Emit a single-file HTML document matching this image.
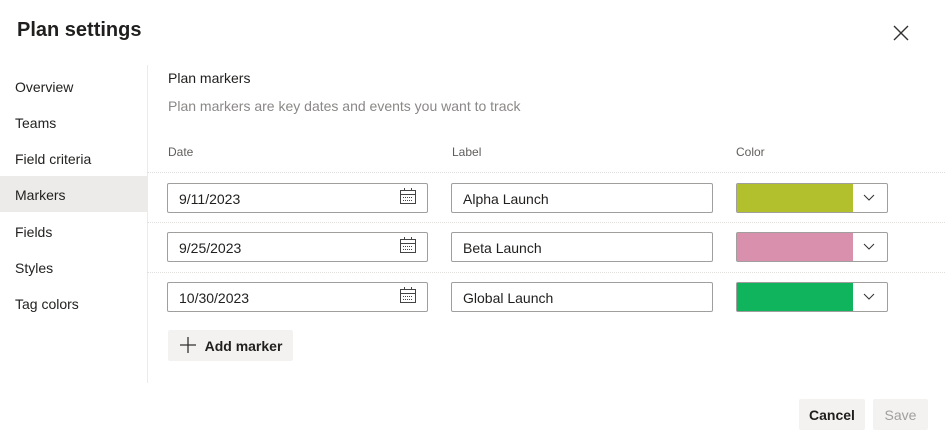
<!DOCTYPE html>
<html><head><style>
*{box-sizing:border-box;margin:0;padding:0}
body{width:945px;height:447px;background:#fff;font-family:"Liberation Sans",sans-serif;color:#201f1e;position:relative;overflow:hidden}
.a{position:absolute}
.nav{font-size:14px;left:0;width:147px;height:36px;line-height:38px;padding-left:15px}
.inp{position:absolute;height:30px;border:1px solid #a19f9d;border-radius:2px;font-size:14px;line-height:30px;padding-left:11px;background:#fff}
.sep{position:absolute;left:147px;right:0;height:0;border-top:1px dotted #e1dfdd}
.hdr{font-size:12px;color:#605e5c;top:145px}
.col{position:absolute;left:736px;width:152px;height:30px;border:1px solid #a19f9d;border-radius:2px;background:#fff}
.col .s{position:absolute;left:0;top:0;bottom:0;width:116px}
.btn{position:absolute;background:#f3f2f1;border-radius:2px;font-size:14px;font-weight:bold;text-align:center;line-height:33px;height:31px}
</style></head><body>
<div class="a" style="left:17px;top:19px;font-size:20px;font-weight:600">Plan settings</div>
<svg class="a" style="left:893px;top:25px" width="16" height="16"><path d="M1 1L15 15M15 1L1 15" stroke="#323130" stroke-width="1.4"/></svg>
<div class="a" style="left:147px;top:65px;width:1px;height:318px;background:#edebe9"></div>
<div class="nav a" style="top:68px">Overview</div>
<div class="nav a" style="top:104px">Teams</div>
<div class="nav a" style="top:140px">Field criteria</div>
<div class="nav a" style="top:176px;background:#edebe9">Markers</div>
<div class="nav a" style="top:213px">Fields</div>
<div class="nav a" style="top:249px">Styles</div>
<div class="nav a" style="top:285px">Tag colors</div>
<div class="a" style="left:168px;top:70px;font-size:14px">Plan markers</div>
<div class="a" style="left:168px;top:98px;font-size:14px;color:#8a8886">Plan markers are key dates and events you want to track</div>
<div class="a hdr" style="left:168px">Date</div>
<div class="a hdr" style="left:452px">Label</div>
<div class="a hdr" style="left:736px">Color</div>
<div class="sep" style="top:172px"></div>
<div class="sep" style="top:222px"></div>
<div class="sep" style="top:272px"></div>

<div class="inp" style="left:167px;top:183px;width:261px">9/11/2023</div>
<div class="inp" style="left:451px;top:183px;width:262px">Alpha Launch</div>
<div class="col" style="top:183px"><div class="s" style="background:#b2c02e"></div></div>
<div class="inp" style="left:167px;top:232px;width:261px">9/25/2023</div>
<div class="inp" style="left:451px;top:232px;width:262px">Beta Launch</div>
<div class="col" style="top:232px"><div class="s" style="background:#d990ad"></div></div>
<div class="inp" style="left:167px;top:282px;width:261px">10/30/2023</div>
<div class="inp" style="left:451px;top:282px;width:262px">Global Launch</div>
<div class="col" style="top:282px"><div class="s" style="background:#0fb45c"></div></div>

<div class="btn" style="left:168px;top:330px;width:125px;padding-left:26px">Add marker</div>
<div class="btn" style="left:799px;top:399px;width:66px">Cancel</div>
<div class="btn" style="left:873px;top:399px;width:55px;color:#a19f9d;font-weight:normal">Save</div>
<svg class="a" style="left:0;top:0" width="945" height="447">
<g fill="none" stroke="#444" stroke-width="1">
<g id="c"><rect x="400.5" y="190.5" width="15" height="13"/><line x1="400" y1="194.5" x2="416" y2="194.5"/><line x1="404.5" y1="188" x2="404.5" y2="191"/><line x1="411.5" y1="188" x2="411.5" y2="191"/><path d="M403 197.5h10M403 200.5h10" stroke-dasharray="1 1"/></g>
<use href="#c" y="49"/><use href="#c" y="99"/>
<path d="M864 195l5 5 5-5M864 244l5 5 5-5M864 294l5 5 5-5" stroke="#323130"/>
<path d="M188 337v16M180 345h16" stroke="#323130" stroke-width="1.3"/>
</g></svg>
</body></html>
